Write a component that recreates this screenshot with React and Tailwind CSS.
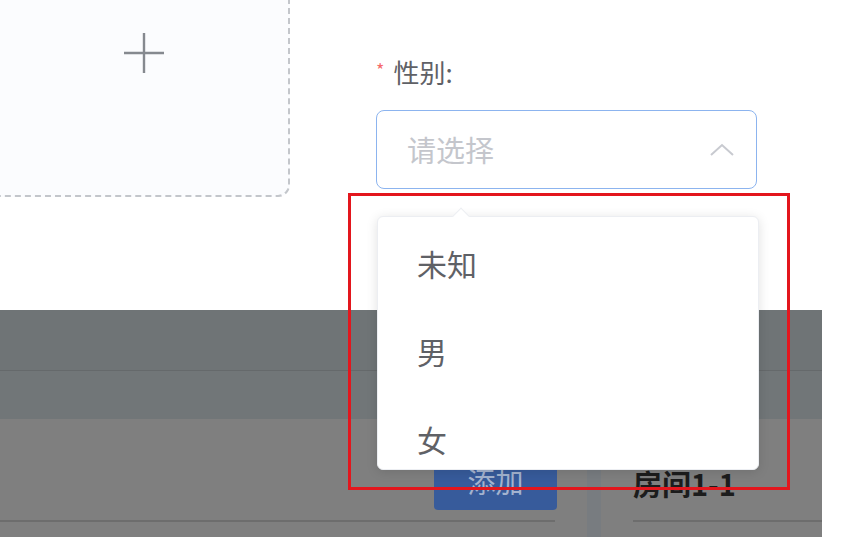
import { useState } from 'react';

const cjk = { fontFamily: '"Noto Sans CJK SC", "Noto Sans", sans-serif' };

function UploadCard() {
	return (
		<div className="-ml-[12px] -mt-[14px] w-[302px] h-[211px] shrink-0 bg-[#fbfcfe] border-2 border-dashed border-[#c3c6cb] rounded-br-[12px] flex justify-center pt-[44px] pl-[10px]">
			<svg width="42" height="42" viewBox="0 0 42 42" className="text-[#85898f]">
				<path d="M21 1v40M1 21h40" stroke="currentColor" strokeWidth="2.4" fill="none" />
			</svg>
		</div>
	);
}

function GenderSelect() {
	return (
		<div className="ml-[86px] pt-[54px]">
			<div className="flex items-center h-[34px] text-[26px] text-[#5f6166]">
				<span className="text-[#f56c6c] text-[18px] mr-[9px] -mt-[4px]">*</span>
				<span>性别:</span>
			</div>
			<div className="mt-[22px] w-[381px] h-[79px] border border-[#8cb4ef] rounded-[8px] flex items-center justify-between pl-[30px] pr-[21px]">
				<span className="text-[29px] text-[#c4c6cc]">请选择</span>
				<svg width="26" height="14" viewBox="0 0 26 14">
					<path d="M2 12L13 2l11 10" stroke="#c8cad0" strokeWidth="2" fill="none" />
				</svg>
			</div>
		</div>
	);
}

function Dropdown({ options, value, onPick }) {
	return (
		<div className="absolute left-[377px] top-[216px] w-[382px] h-[254px] bg-white rounded-[6px] shadow-[0_2px_12px_rgba(0,0,0,0.12)] border border-[#eceef2]">
			<div className="absolute -top-[7px] left-[77px] w-[12px] h-[12px] bg-white border-l border-t border-[#eceef2] rotate-45"></div>
			<div className="h-full overflow-hidden rounded-[6px] pt-[2px]">
				{options.map((o) => (
					<div
						key={o}
						onClick={() => onPick(o)}
						className={"h-[88px] flex items-center pl-[39px] text-[30px] " + (value === o ? "text-[#409eff]" : "text-[#5f6166]")}
					>
						{o}
					</div>
				))}
			</div>
		</div>
	);
}

export default function App() {
	const [gender, setGender] = useState(null);

	return (
		<div className="relative w-[862px] h-[547px] bg-white overflow-hidden" style={cjk}>
			{/* dialog part */}
			<div className="flex h-[310px]">
				<UploadCard />
				<GenderSelect />
			</div>

			{/* masked table */}
			<div className="w-[822px] h-[227px] flex flex-col">
				<div className="h-[61px] bg-[#6f7476] border-b border-[#65696b]"></div>
				<div className="h-[48px] bg-[#717678]"></div>
				<div className="h-[118px] bg-[#7f7f7f] flex">
					<div className="w-[587px] flex flex-col">
						<div className="h-[101px] pl-[434px] pt-[43px]">
							<div className="w-[123px] h-[48px] bg-[#375b9b] rounded-[4px] flex items-center justify-center pb-[10px] text-[28px] text-[#a3b3cf]">添加</div>
						</div>
						<div className="h-[2px] bg-[#6d6d6d] mr-[32px]"></div>
					</div>
					<div className="w-[14px] bg-[#787c80]"></div>
					<div className="flex-1 flex flex-col">
						<div className="h-[101px] pl-[32px] pt-[50px]">
							<span className="text-[29px] font-bold text-[#1c1c1c] leading-none">房间1-1</span>
						</div>
						<div className="h-[2px] bg-[#6d6d6d] ml-[32px]"></div>
					</div>
				</div>
			</div>

			<Dropdown options={["未知", "男", "女"]} value={gender} onPick={setGender} />

			{/* annotation */}
			<div className="absolute left-[348px] top-[193px] w-[442px] h-[297px] border-[3px] border-[#e3161d] pointer-events-none"></div>
		</div>
	);
}
